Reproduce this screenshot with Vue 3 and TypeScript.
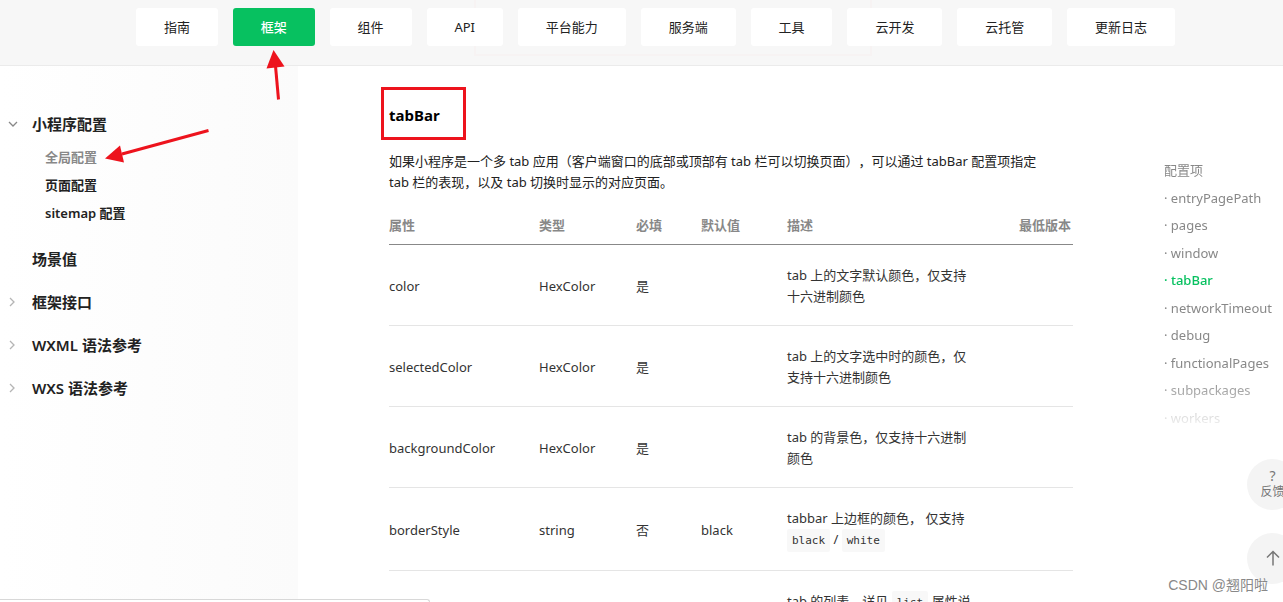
<script setup lang="ts">
interface Part {
  text: string
  code?: boolean
}
interface Row {
  name: string
  type: string
  required: string
  fallback: string
  desc: Part[]
}
interface Group {
  title: string
  state: 'open' | 'closed' | 'leaf'
  children: string[]
}

const tabs: string[] = ['指南', '框架', '组件', 'API', '平台能力', '服务端', '工具', '云开发', '云托管', '更新日志']
const activeTab = '框架'

const groups: Group[] = [
  { title: '小程序配置', state: 'open', children: ['全局配置', '页面配置', 'sitemap 配置'] },
  { title: '场景值', state: 'leaf', children: [] },
  { title: '框架接口', state: 'closed', children: [] },
  { title: 'WXML 语法参考', state: 'closed', children: [] },
  { title: 'WXS 语法参考', state: 'closed', children: [] },
]
const activePage = '全局配置'

const rows: Row[] = [
  { name: 'color', type: 'HexColor', required: '是', fallback: '', desc: [{ text: 'tab 上的文字默认颜色，仅支持十六进制颜色' }] },
  { name: 'selectedColor', type: 'HexColor', required: '是', fallback: '', desc: [{ text: 'tab 上的文字选中时的颜色，仅支持十六进制颜色' }] },
  { name: 'backgroundColor', type: 'HexColor', required: '是', fallback: '', desc: [{ text: 'tab 的背景色，仅支持十六进制颜色' }] },
  {
    name: 'borderStyle',
    type: 'string',
    required: '否',
    fallback: 'black',
    desc: [{ text: 'tabbar 上边框的颜色， 仅支持 ' }, { text: 'black', code: true }, { text: ' / ' }, { text: 'white', code: true }],
  },
  {
    name: '',
    type: '',
    required: '',
    fallback: '',
    desc: [{ text: 'tab 的列表，详见 ' }, { text: 'list', code: true }, { text: ' 属性说' }],
  },
]

const anchors: string[] = ['entryPagePath', 'pages', 'window', 'tabBar', 'networkTimeout', 'debug', 'functionalPages', 'subpackages', 'workers']
const activeAnchor = 'tabBar'
</script>

<template>
  <div class="page">
    <header class="top">
      <div class="ghost"></div>
      <nav class="tabs">
        <a v-for="t in tabs" :key="t" href="#" class="tab" :class="{ active: t === activeTab }">{{ t }}</a>
      </nav>
    </header>

    <div class="body">
      <nav class="side">
        <div v-for="g in groups" :key="g.title" class="group">
          <a href="#" class="group-title">
            <svg v-if="g.state === 'open'" class="chev" viewBox="0 0 10 10"><path d="M1 3l4 4 4-4" fill="none" stroke="#888" stroke-width="1.3" /></svg>
            <svg v-else-if="g.state === 'closed'" class="chev" viewBox="0 0 10 10"><path d="M2 1l4 4-4 4" fill="none" stroke="#b5b5b5" stroke-width="1.3" /></svg>
            <span v-else class="chev"></span>
            {{ g.title }}
          </a>
          <ul v-if="g.children.length" class="children">
            <li v-for="c in g.children" :key="c"><a href="#" :class="{ current: c === activePage }">{{ c }}</a></li>
          </ul>
        </div>
      </nav>

      <main class="main">
        <h2>tabBar</h2>
        <p>如果小程序是一个多 tab 应用（客户端窗口的底部或顶部有 tab 栏可以切换页面），可以通过 tabBar 配置项指定 tab 栏的表现，以及 tab 切换时显示的对应页面。</p>
        <table>
          <colgroup>
            <col class="c-name" /><col class="c-type" /><col class="c-req" /><col class="c-def" /><col /><col class="c-ver" />
          </colgroup>
          <thead>
            <tr><th>属性</th><th>类型</th><th>必填</th><th>默认值</th><th>描述</th><th>最低版本</th></tr>
          </thead>
          <tbody>
            <tr v-for="(r, n) in rows" :key="n">
              <td>{{ r.name }}</td>
              <td>{{ r.type }}</td>
              <td>{{ r.required }}</td>
              <td>{{ r.fallback }}</td>
              <td class="desc"><template v-for="(p, i) in r.desc" :key="i"><code v-if="p.code">{{ p.text }}</code><template v-else>{{ p.text }}</template></template></td>
              <td></td>
            </tr>
          </tbody>
        </table>
      </main>

      <nav class="toc">
        <span class="toc-item">配置项</span>
        <a v-for="a in anchors" :key="a" href="#" class="toc-item" :class="{ here: a === activeAnchor }">· {{ a }}</a>
      </nav>
    </div>

    <div class="floating">
      <button type="button" class="round"><span class="q">?</span><span>反馈</span></button>
      <button type="button" class="round" aria-label="Top">
        <svg class="up" viewBox="0 0 14 16"><path d="M7 15.500V1.500M1 7.500l6-6 6 6" fill="none" stroke="#777" stroke-width="1.500" /></svg>
      </button>
    </div>

    <div class="status"></div>
    <div class="mark">CSDN @翘阳啦</div>

    <svg class="notes" width="480" height="170" viewBox="0 0 480 170">
      <g fill="none" stroke="#ed131d" stroke-width="3">
        <path d="M278.500 99.500L275.500 66" />
        <path d="M208.500 130.500L122 154" />
        <rect x="382.500" y="88.500" width="82" height="50" />
      </g>
      <path d="M273.500 50L284.500 66.500L266.500 68.500Z" fill="#ed131d" />
      <path d="M105 158.500L120 145.500L124 162.500Z" fill="#ed131d" />
    </svg>
  </div>
</template>

<style>
body {
  margin: 0;
}
</style>

<style scoped>
.page {
  position: relative;
  display: flex;
  flex-direction: column;
  height: 100vh;
  overflow: hidden;
  background: #fff;
  color: #222;
  font: 13px/21px "Noto Sans", "Noto Sans CJK SC", sans-serif;
  text-spacing-trim: space-all;
}
a {
  color: inherit;
  text-decoration: none;
}
.top {
  position: relative;
  flex: none;
  background: #f7f7f7;
  border-bottom: 1px solid #ebebeb;
}
.ghost {
  position: absolute;
  left: 474px;
  top: -4px;
  width: 394px;
  height: 56px;
  border: 2px solid #f7f3f3;
}
.tabs {
  position: relative;
  display: flex;
  gap: 15px;
  padding: 8px 108px 19px 136px;
}
.tab {
  flex: 1 0 auto;
  padding: 0 27px;
  line-height: 38px;
  border-radius: 3px;
  background: #fff;
  text-align: center;
  white-space: nowrap;
}
.tab.active {
  background: #07c160;
  color: #fff;
  font-weight: 500;
}
.body {
  display: flex;
  flex: 1;
  min-height: 0;
}
.side {
  flex: none;
  box-sizing: border-box;
  width: 298px;
  padding: 47px 0 0 8px;
  background: linear-gradient(90deg, #fff, #fbfbfb);
  font-weight: 600;
}
.group {
  margin-bottom: 21px;
}
.group-title {
  display: flex;
  align-items: center;
  font-size: 15px;
  line-height: 22px;
}
.chev {
  width: 10px;
  height: 10px;
  margin-right: 14px;
}
.children {
  margin: 0;
  padding: 8px 0 0 37px;
  list-style: none;
  line-height: 28px;
}
.current {
  color: #888;
}
.main {
  flex: 1;
  padding: 38px 91px 0;
}
h2 {
  margin: 0 0 25px;
  font-size: 15px;
  line-height: 22px;
  color: #000;
}
p {
  margin: 0 0 22px;
  padding-right: 24px;
}
table {
  width: 100%;
  table-layout: fixed;
  border-collapse: separate;
  border-spacing: 0;
  color: #333;
}
.c-name {
  width: 150px;
}
.c-type {
  width: 97px;
}
.c-req {
  width: 65px;
}
.c-def {
  width: 86px;
}
.c-ver {
  width: 54px;
}
th {
  padding: 0 0 8px;
  border-bottom: 1px solid #888;
  color: #888;
  font-weight: 600;
  text-align: left;
  white-space: nowrap;
}
td {
  padding: 20px 0 18px;
  border-bottom: 1px solid #e5e5e5;
}
.desc {
  padding-right: 43px;
}
code {
  display: inline-block;
  padding: 1px 5px;
  border-radius: 2px;
  background: #f8f8f8;
  font: 11px/21px "DejaVu Sans Mono", monospace;
}
.toc {
  display: flex;
  flex: none;
  flex-direction: column;
  width: 119px;
  height: 275px;
  margin-top: 91px;
  color: #888;
  white-space: nowrap;
  mask-image: linear-gradient(#000 80%, transparent 100%);
}
.toc-item {
  display: flex;
  flex: 1;
  align-items: center;
}
.here {
  color: #07c160;
  font-weight: 500;
}
.floating {
  position: absolute;
  right: -15px;
  bottom: 18px;
  display: flex;
  flex-direction: column;
  gap: 23px;
}
.round {
  display: flex;
  flex-direction: column;
  align-items: center;
  justify-content: center;
  width: 51px;
  height: 51px;
  padding: 0 0 2px;
  border: 0;
  border-radius: 50%;
  background: #f4f4f4;
  color: #777;
  font: 12px/16px "Noto Sans", "Noto Sans CJK SC", sans-serif;
  white-space: nowrap;
}
.q {
  font-size: 14px;
}
.up {
  width: 14px;
  height: 16px;
}
.status {
  position: absolute;
  left: 0;
  bottom: 0;
  width: 429px;
  height: 2px;
  border: 1px solid #d8d8d8;
  border-width: 1px 1px 0 0;
  border-radius: 0 3px 0 0;
  background: #fff;
}
.mark {
  position: absolute;
  right: 15px;
  bottom: 7px;
  color: #888;
  font: 14px/20px "Liberation Sans", "Noto Sans CJK SC", sans-serif;
}
.notes {
  position: absolute;
  left: 0;
  top: 0;
  pointer-events: none;
}
</style>
